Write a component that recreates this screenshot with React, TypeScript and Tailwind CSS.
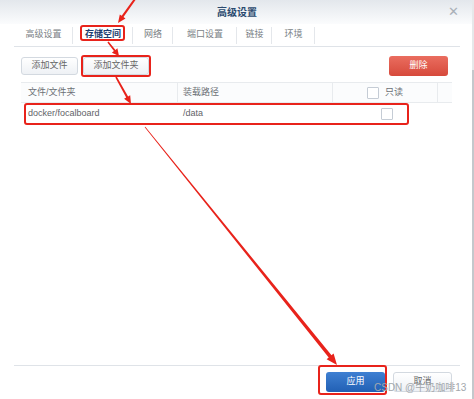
const font = { fontFamily: '"Liberation Sans", "Noto Sans CJK SC", sans-serif' };

const tabs = [
  { label: '高级设置', w: 'w-[59px]' },
  { label: '存储空间', w: 'w-[60px]', active: true },
  { label: '网络', w: 'w-[40px]' },
  { label: '端口设置', w: 'w-[64px]' },
  { label: '链接', w: 'w-[35px]' },
  { label: '环境', w: 'w-[43px]' },
];

const RED = '#e8231b';

function arrowPoints(x1: number, y1: number, x2: number, y2: number, w1: number, w2: number, head = 9, hw = 4) {
  const dx = x2 - x1;
  const dy = y2 - y1;
  const len = Math.hypot(dx, dy);
  const ux = dx / len;
  const uy = dy / len;
  const nx = -uy;
  const ny = ux;
  const bx = x2 - ux * head;
  const by = y2 - uy * head;
  const pts = [
    [x1 + nx * w1 / 2, y1 + ny * w1 / 2],
    [bx + nx * w2 / 2, by + ny * w2 / 2],
    [bx + nx * hw, by + ny * hw],
    [x2, y2],
    [bx - nx * hw, by - ny * hw],
    [bx - nx * w2 / 2, by - ny * w2 / 2],
    [x1 - nx * w1 / 2, y1 - ny * w1 / 2],
  ];
  return pts.map((p) => p.map((v) => v.toFixed(1)).join(',')).join(' ');
}

function Checkbox() {
  return <span className="inline-block w-[12px] h-[12px] border border-[#c5ccd5] bg-white rounded-[1px]" />;
}

function Annotations() {
  return (
    <svg className="absolute inset-0 pointer-events-none" width={474} height={399} viewBox="0 0 474 399">
      <rect x={81} y={26} width={43} height={14} rx={2} fill="none" stroke={RED} strokeWidth={2} />
      <rect x={82} y={56} width={68} height={20} rx={2} fill="none" stroke={RED} strokeWidth={2} />
      <rect x={25} y={104} width={383} height={20} rx={2} fill="none" stroke={RED} strokeWidth={2} />
      <rect x={319} y={366} width={67} height={28} rx={2} fill="none" stroke={RED} strokeWidth={2} />
      <polygon points={arrowPoints(135, -1, 118, 23, 2, 2.2, 8, 3.5)} fill={RED} />
      <polygon points={arrowPoints(108, 42, 119, 56, 1.5, 2, 7, 3.5)} fill={RED} />
      <polygon points={arrowPoints(116, 77, 131, 104, 1.5, 2.2, 8, 3.5)} fill={RED} />
      <polygon points={arrowPoints(145, 127, 337, 365, 0.8, 3.6, 11, 4.5)} fill={RED} />
    </svg>
  );
}

export default function App() {
  return (
    <div className="relative w-[474px] h-[399px] bg-white overflow-hidden flex flex-col" style={font}>
      <div className="h-[24px] shrink-0 flex items-center justify-center relative bg-gradient-to-b from-[#e3e7ec] to-[#fbfcfd]">
        <span className="text-[10px] font-bold text-[#2b4a6f]">高级设置</span>
        <span className="absolute right-[15px] top-[5px] text-[13px] leading-none text-[#a9b0b8]">✕</span>
      </div>

      <div className="mx-[14px] h-[23px] shrink-0 flex border-b border-[#dfe3e8]">
        {tabs.map((t) => (
          <div key={t.label} className={`${t.w} h-full flex items-center justify-center relative`}>
            <span className={t.active ? 'text-[9px] font-bold text-[#1c3e70]' : 'text-[9px] text-[#7a7f85]'}>{t.label}</span>
            <span className="absolute right-0 top-[3px] bottom-[2px] w-px bg-[#e4e7eb]" />
          </div>
        ))}
      </div>

      <div className="ml-[21px] mr-[26px] mt-[9px] h-[20px] shrink-0 flex items-center">
        <button className="w-[57px] h-[18px] text-[9px] text-[#666] border border-[#d3d9e0] rounded-[3px] bg-gradient-to-b from-white to-[#eef1f5]">
          添加文件
        </button>
        <button className="ml-[5px] w-[66px] h-[18px] text-[9px] text-[#666] border border-[#d3d9e0] rounded-[3px] bg-gradient-to-b from-white to-[#eef1f5]">
          添加文件夹
        </button>
        <div className="flex-1" />
        <button className="w-[59px] h-[20px] text-[9px] text-white rounded-[3px] bg-gradient-to-b from-[#ea6d5f] to-[#d6493b]">
          删除
        </button>
      </div>

      <div className="ml-[21px] mr-[22px] mt-[6px] shrink-0 text-[9px] text-[#6b7075]">
        <div className="h-[21px] flex items-stretch border-t border-b border-[#e8ebee] bg-[#fbfcfd]">
          <div className="w-[157px] flex items-center pl-[7px] border-r border-[#e8ebee]">文件/文件夹</div>
          <div className="w-[155px] flex items-center pl-[5px] border-r border-[#e8ebee]">装载路径</div>
          <div className="w-[105px] flex items-center justify-center gap-[6px] border-r border-[#e8ebee]">
            <Checkbox />
            <span>只读</span>
          </div>
          <div className="flex-1" />
        </div>
        <div className="h-[22px] flex items-stretch text-[#5f6368]">
          <div className="w-[157px] flex items-center pl-[7px]">docker/focalboard</div>
          <div className="w-[155px] flex items-center pl-[5px]">/data</div>
          <div className="w-[105px] flex items-center justify-center pl-[3px]">
            <Checkbox />
          </div>
        </div>
      </div>

      <div className="flex-1" />

      <div className="mx-[14px] h-[34px] shrink-0 border-t border-[#dfe3e8] flex items-start justify-end pt-[6px] pr-[8px] gap-[8px]">
        <button className="w-[59px] h-[20px] text-[9px] text-white rounded-[3px] bg-gradient-to-b from-[#3f80d2] to-[#2160b4]">
          应用
        </button>
        <button className="w-[59px] h-[20px] text-[9px] text-[#666] border border-[#d3d9e0] rounded-[3px] bg-gradient-to-b from-white to-[#eef1f5]">
          取消
        </button>
      </div>

      <div className="absolute right-0 top-[70px] bottom-0 w-[2px] bg-[#c4c8cc]" />
      <div className="absolute right-0 top-0 h-[70px] w-[2px] bg-[#e6e8ea]" />

      <Annotations />

      <span className="absolute left-[374px] top-[383px] text-[10px] leading-none text-[#a3a8ad] whitespace-nowrap">
        CSDN @牛奶咖啡13
      </span>
    </div>
  );
}
